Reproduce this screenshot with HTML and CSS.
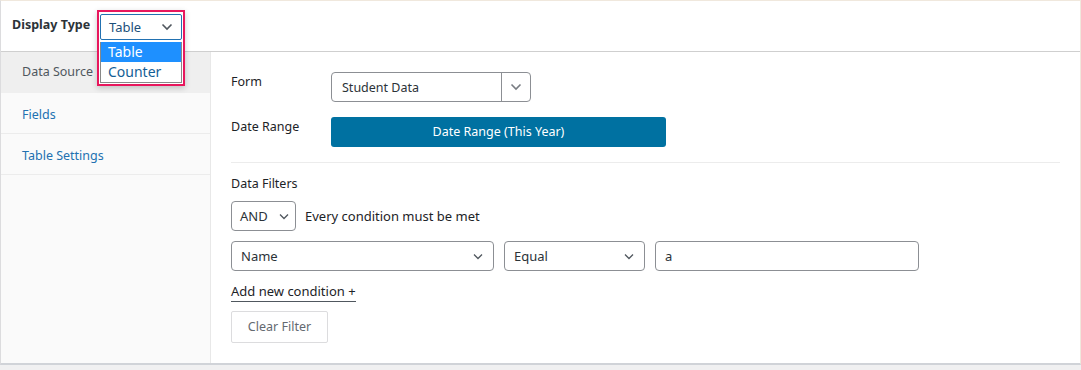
FILE: index.html
```html
<!DOCTYPE html>
<html>
<head>
<meta charset="utf-8">
<link rel="stylesheet" href="styles.css">
</head>
<body>
<div class="frame">
  <div class="header">
    <span class="dt-label">Display Type</span>
    <div class="dt-wrap">
      <div class="dt-select">
        <span>Table</span>
        <svg class="chev" width="12" height="8" viewBox="0 0 12 8"><path d="M1.5 1.5 L6 6 L10.5 1.5" fill="none" stroke="#50575e" stroke-width="1.6"/></svg>
      </div>
      <div class="dt-list">
        <div class="dt-opt sel">Table</div>
        <div class="dt-opt">Counter</div>
      </div>
    </div>
  </div>
  <div class="body">
    <div class="side">
      <div class="tab active">Data Source</div>
      <div class="tab">Fields</div>
      <div class="tab">Table Settings</div>
    </div>
    <div class="main">
      <div class="row r-form">
        <div class="lbl">Form</div>
        <div class="form-select">
          <span class="fs-text">Student Data</span>
          <span class="fs-btn"><svg width="12" height="8" viewBox="0 0 12 8"><path d="M1.5 1.5 L6 6 L10.5 1.5" fill="none" stroke="#787c82" stroke-width="1.6"/></svg></span>
        </div>
      </div>
      <div class="row r-date">
        <div class="lbl">Date Range</div>
        <div class="date-btn">Date Range (This Year)</div>
      </div>
      <div class="sep"></div>
      <div class="df-title">Data Filters</div>
      <div class="and-row">
        <div class="sel-box and"><span>AND</span><svg width="10" height="7" viewBox="0 0 10 7"><path d="M1 1.5 L5 5.5 L9 1.5" fill="none" stroke="#50575e" stroke-width="1.3"/></svg></div>
        <span class="and-text">Every condition must be met</span>
      </div>
      <div class="cond-row">
        <div class="sel-box name"><span>Name</span><svg width="10" height="7" viewBox="0 0 10 7"><path d="M1 1.5 L5 5.5 L9 1.5" fill="none" stroke="#50575e" stroke-width="1.3"/></svg></div>
        <div class="sel-box equal"><span>Equal</span><svg width="10" height="7" viewBox="0 0 10 7"><path d="M1 1.5 L5 5.5 L9 1.5" fill="none" stroke="#50575e" stroke-width="1.3"/></svg></div>
        <div class="sel-box val"><span>a</span></div>
      </div>
      <div class="add-wrap"><span class="add">Add new condition +</span></div>
      <div class="clear">Clear Filter</div>
    </div>
  </div>
</div>
</body>
</html>
```
FILE: styles.css
```css
* { box-sizing: border-box; }
html, body { margin: 0; padding: 0; background: #f0f0f1; }
body { font-family: "Noto Sans", "Open Sans", sans-serif; font-size: 13px; color: #1d2327; }
.frame {
  width: 1081px;
  height: 365px;
  background: #fff;
  border-top: 1px solid #f0e8dd;
  border-right: 1px solid #f0e8dd;
  border-left: 1px solid #dcdcde;
  border-bottom: 2px solid #d0d3d8;
  display: flex;
  flex-direction: column;
}
.header {
  height: 51px;
  border-bottom: 1px solid #cfcfcf;
  display: flex;
  align-items: flex-start;
  position: relative;
  z-index: 2;
}
.dt-label { font-weight: 700; font-size: 12.5px; color: #2c3338; margin: 15px 0 0 11px; }
.dt-wrap {
  position: absolute;
  left: 96px;
  top: 9px;
  width: 88px;
  border: 2px solid #e8175d;
  box-shadow: 0 2px 6px rgba(0,0,0,0.2);
  padding: 1px;
  background: #fff;
}
.dt-select {
  height: 26px;
  margin-top: 1px;
  border: 1px solid #2271b1;
  border-radius: 2px;
  display: flex;
  align-items: center;
  justify-content: space-between;
  padding: 0 8px 0 8px;
  color: #1d4f7a;
  font-size: 13px;
}
.dt-list { margin-top: 2px; border: 1px solid #888; border-top: none; }
.dt-opt { height: 20px; line-height: 19px; padding-left: 7px; color: #135e96; font-size: 14px; }
.dt-opt.sel { background: #1e90ff; color: #fff; }
.body { flex: 1; display: flex; }
.side { width: 210px; background: #fafafa; border-right: 1px solid #e8e8e8; }
.tab {
  height: 41px;
  line-height: 40px;
  padding-left: 21px;
  padding-top: 2px;
  color: #2271b1;
  font-size: 12.5px;
  border-bottom: 1px solid #ececec;
}
.tab.active { background: #efefef; color: #50575e; border-bottom-color: #efefef; padding-top: 0; }
.main { flex: 1; padding: 20px 20px 0 20px; }
.row { display: flex; }
.lbl { width: 100px; font-size: 12.5px; color: #1d2327; }
.r-form .lbl { padding-top: 1px; }
.form-select {
  width: 200px; height: 30px;
  border: 1px solid #8c8f94; border-radius: 4px;
  display: flex;
}
.fs-text { flex: 1; padding-left: 10px; line-height: 29px; font-size: 12.5px; color: #2c3338; }
.fs-btn { width: 29px; border-left: 1px solid #8c8f94; display: flex; align-items: center; justify-content: center; }
.r-date { margin-top: 15px; }
.r-date .lbl { padding-top: 1px; }
.date-btn {
  width: 335px; height: 30px;
  background: #0071a1; color: #fff; border-radius: 3px;
  text-align: center; line-height: 30px; font-size: 12.5px;
}
.sep { height: 1px; background: #ececec; margin: 15px 0 0 0; }
.df-title { margin-top: 12px; font-size: 12.5px; height: 18px; }
.and-row { display: flex; align-items: center; margin-top: 8px; }
.sel-box {
  height: 30px; border: 1px solid #8c8f94; border-radius: 4px;
  display: flex; align-items: center; justify-content: space-between;
  padding: 0 10px 0 9px; font-size: 13px; color: #2c3338;
}
.sel-box.and { width: 65px; padding: 0 6px 0 8px; }
.and-text { margin-left: 9px; font-size: 13px; }
.cond-row { display: flex; margin-top: 10px; }
.sel-box.name { width: 263px; }
.sel-box.equal { width: 141px; margin-left: 10px; }
.sel-box.val { width: 264px; margin-left: 10px; }
.add-wrap { margin-top: 11px; height: 20px; }
.add { border-bottom: 1px solid #50575e; font-size: 13px; color: #1d2327; padding-bottom: 1px; }
.clear {
  margin-top: 9px; width: 97px; height: 32px;
  border: 1px solid #dcdcde; border-radius: 2px;
  text-align: center; line-height: 30px; color: #646970; font-size: 12.5px;
}
```
